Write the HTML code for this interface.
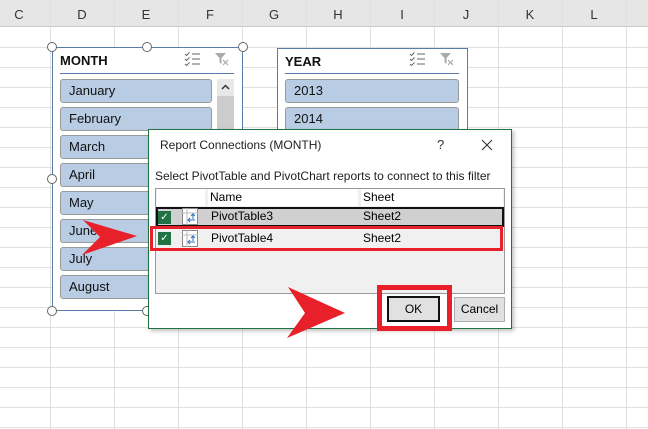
<!DOCTYPE html>
<html><head><style>
*{margin:0;padding:0;box-sizing:border-box}
body{width:648px;height:429px;overflow:hidden;background:#fff;font-family:"Liberation Sans",sans-serif;position:relative}
.a{position:absolute}
.hdr{top:0;left:0;width:648px;height:27px;background:#e6e6e6;border-bottom:1px solid #c8c8c8}
.cl{position:absolute;top:0;height:27px;width:64px;text-align:center;line-height:30px;font-size:13px;color:#333}
.vl{position:absolute;width:1px;background:#e0e0e0}
.hl{position:absolute;left:0;width:648px;height:1px;background:#e0e0e0}
.item{position:absolute;width:152px;height:24px;background:#b8cce4;border:1px solid #999;border-radius:3px;font-size:13px;line-height:22px;padding-left:8px;color:#111}
.h{position:absolute;width:10px;height:10px;border:1.5px solid #666;border-radius:50%;background:#fff}
</style></head><body>
<div class="a hdr"></div>
<div class="cl" style="left:-13px">C</div><div class="cl" style="left:50px">D</div><div class="cl" style="left:114px">E</div><div class="cl" style="left:178px">F</div><div class="cl" style="left:242px">G</div><div class="cl" style="left:306px">H</div><div class="cl" style="left:370px">I</div><div class="cl" style="left:434px">J</div><div class="cl" style="left:498px">K</div><div class="cl" style="left:562px">L</div>
<div class="vl" style="left:50px;top:0;height:429px"></div><div class="vl" style="left:114px;top:0;height:429px"></div><div class="vl" style="left:178px;top:0;height:429px"></div><div class="vl" style="left:242px;top:0;height:429px"></div><div class="vl" style="left:306px;top:0;height:429px"></div><div class="vl" style="left:370px;top:0;height:429px"></div><div class="vl" style="left:434px;top:0;height:429px"></div><div class="vl" style="left:498px;top:0;height:429px"></div><div class="vl" style="left:562px;top:0;height:429px"></div><div class="vl" style="left:626px;top:0;height:429px"></div>
<div class="hl" style="top:47px"></div><div class="hl" style="top:67px"></div><div class="hl" style="top:87px"></div><div class="hl" style="top:107px"></div><div class="hl" style="top:127px"></div><div class="hl" style="top:147px"></div><div class="hl" style="top:167px"></div><div class="hl" style="top:187px"></div><div class="hl" style="top:207px"></div><div class="hl" style="top:227px"></div><div class="hl" style="top:247px"></div><div class="hl" style="top:267px"></div><div class="hl" style="top:287px"></div><div class="hl" style="top:307px"></div><div class="hl" style="top:327px"></div><div class="hl" style="top:347px"></div><div class="hl" style="top:367px"></div><div class="hl" style="top:387px"></div><div class="hl" style="top:407px"></div><div class="hl" style="top:427px"></div>

<!-- MONTH slicer -->
<div class="a" style="left:52px;top:47px;width:191px;height:264px;background:#fff;border:1.5px solid #5a7ca8"></div>
<div class="a" style="left:60px;top:53px;font-weight:bold;font-size:13px;color:#111">MONTH</div>
<svg class="a" style="left:184px;top:52px" width="16" height="14"><g stroke="#666" fill="none" stroke-width="1"><path d="M1 2l1.5 1.5 3-3M1 7l1.5 1.5 3-3M1 12l1.5 1.5 3-3M8 2h8M8 7h8M8 12h8"/></g></svg>
<svg class="a" style="left:214px;top:52px" width="16" height="14"><path d="M1 1h11l-4.5 5v6l-2-1.5v-4.5z" fill="#aaa"/><path d="M9 8l5 5M14 8l-5 5" stroke="#aaa" stroke-width="1.2"/></svg>
<div class="a" style="left:60px;top:73px;width:174px;height:1px;background:#5a7ca8"></div>
<div class="a" style="left:217px;top:79px;width:17px;height:220px;background:#e8e8e8"></div>
<div class="a" style="left:217px;top:96px;width:17px;height:40px;background:#cdcdcd"></div>
<svg class="a" style="left:221px;top:84px" width="9" height="6"><path d="M1 5l3.5-3.5 3.5 3.5" stroke="#333" stroke-width="1.5" fill="none"/></svg>
<div class="item" style="left:60px;top:79px">January</div>
<div class="item" style="left:60px;top:107px">February</div>
<div class="item" style="left:60px;top:135px">March</div>
<div class="item" style="left:60px;top:163px">April</div>
<div class="item" style="left:60px;top:191px">May</div>
<div class="item" style="left:60px;top:219px">June</div>
<div class="item" style="left:60px;top:247px">July</div>
<div class="item" style="left:60px;top:275px">August</div>
<div class="h" style="left:47px;top:42px"></div><div class="h" style="left:142px;top:42px"></div><div class="h" style="left:238px;top:42px"></div><div class="h" style="left:47px;top:174px"></div><div class="h" style="left:47px;top:306px"></div><div class="h" style="left:142px;top:306px"></div>

<!-- YEAR slicer -->
<div class="a" style="left:277px;top:48px;width:191px;height:100px;background:#fff;border:1px solid #5a7ca8"></div>
<div class="a" style="left:285px;top:54px;font-weight:bold;font-size:13px;color:#111">YEAR</div>
<svg class="a" style="left:409px;top:52px" width="16" height="14"><g stroke="#666" fill="none" stroke-width="1"><path d="M1 2l1.5 1.5 3-3M1 7l1.5 1.5 3-3M1 12l1.5 1.5 3-3M8 2h8M8 7h8M8 12h8"/></g></svg>
<svg class="a" style="left:439px;top:52px" width="16" height="14"><path d="M1 1h11l-4.5 5v6l-2-1.5v-4.5z" fill="#aaa"/><path d="M9 8l5 5M14 8l-5 5" stroke="#aaa" stroke-width="1.2"/></svg>
<div class="a" style="left:285px;top:73px;width:174px;height:1px;background:#5a7ca8"></div>
<div class="item" style="left:285px;top:79px;width:174px">2013</div>
<div class="item" style="left:285px;top:107px;width:174px">2014</div>

<!-- dialog -->
<div class="a" style="left:148px;top:129px;width:364px;height:200px;background:#fff;border:1px solid #217346;box-shadow:2px 2px 4px rgba(0,0,0,.25)"></div>
<div class="a" style="left:160px;top:138px;font-size:12px;color:#222">Report Connections (MONTH)</div>
<div class="a" style="left:437px;top:137px;font-size:13px;color:#333">?</div>
<svg class="a" style="left:481px;top:139px" width="12" height="12"><path d="M1 1l10 10M11 1l-10 10" stroke="#333" stroke-width="1.1"/></svg>
<div class="a" style="left:155px;top:169px;font-size:12px;color:#222">Select PivotTable and PivotChart reports to connect to this filter</div>
<div class="a" style="left:155px;top:188px;width:350px;height:106px;background:#f0f0f0;border:1px solid #999"></div>
<div class="a" style="left:157px;top:189px;width:48px;height:17px;background:#fff"></div>
<div class="a" style="left:208px;top:189px;width:150px;height:17px;background:#fff;font-size:12px;line-height:17px;padding-left:2px">Name</div>
<div class="a" style="left:361px;top:189px;width:142px;height:17px;background:#fff;font-size:12px;line-height:17px;padding-left:2px">Sheet</div>
<div class="a" style="left:156px;top:207px;width:348px;height:20px;background:#d0d0d0;border:2px solid #111"></div>
<div class="a" style="left:211px;top:209px;font-size:12px">PivotTable3</div>
<div class="a" style="left:363px;top:209px;font-size:12px">Sheet2</div>
<div class="a" style="left:211px;top:231px;font-size:12px">PivotTable4</div>
<div class="a" style="left:363px;top:231px;font-size:12px">Sheet2</div>
<div class="a" style="left:158px;top:211px;width:13px;height:13px;background:#217346;color:#fff;font-size:10px;line-height:13px;text-align:center">✓</div>
<div class="a" style="left:158px;top:232px;width:13px;height:13px;background:#217346;color:#fff;font-size:10px;line-height:13px;text-align:center">✓</div>
<svg class="a" style="left:182px;top:208px" width="16" height="17"><rect x="0.5" y="0.5" width="15" height="16" fill="#fff" stroke="#888"/><path d="M0 5h16M5 0v17" stroke="#bbb"/><path d="M7 12h6M8 10l-2 2 2 2M11 6v5M9 8l2-2 2 2" stroke="#2a6ebb" fill="none"/></svg>
<svg class="a" style="left:182px;top:230px" width="16" height="17"><rect x="0.5" y="0.5" width="15" height="16" fill="#fff" stroke="#888"/><path d="M0 5h16M5 0v17" stroke="#bbb"/><path d="M7 12h6M8 10l-2 2 2 2M11 6v5M9 8l2-2 2 2" stroke="#2a6ebb" fill="none"/></svg>
<div class="a" style="left:150px;top:226px;width:353px;height:25px;border:3px solid #e8202a"></div>
<div class="a" style="left:387px;top:296px;width:53px;height:26px;background:#e1e1e1;border:2px solid #111;font-size:12px;line-height:22px;text-align:center">OK</div>
<div class="a" style="left:454px;top:297px;width:51px;height:25px;background:#e1e1e1;border:1px solid #adadad;font-size:12px;line-height:23px;text-align:center">Cancel</div>
<div class="a" style="left:377px;top:285px;width:75px;height:46px;border:5px solid #e8202a"></div>

<svg class="a" style="left:0;top:0" width="648" height="429">
<polygon points="83,220 137,236 82,255 100,237" fill="#e8202a"/>
<polygon points="288,287 345,313 287,338 305,313" fill="#e8202a"/>
</svg>
</body></html>
